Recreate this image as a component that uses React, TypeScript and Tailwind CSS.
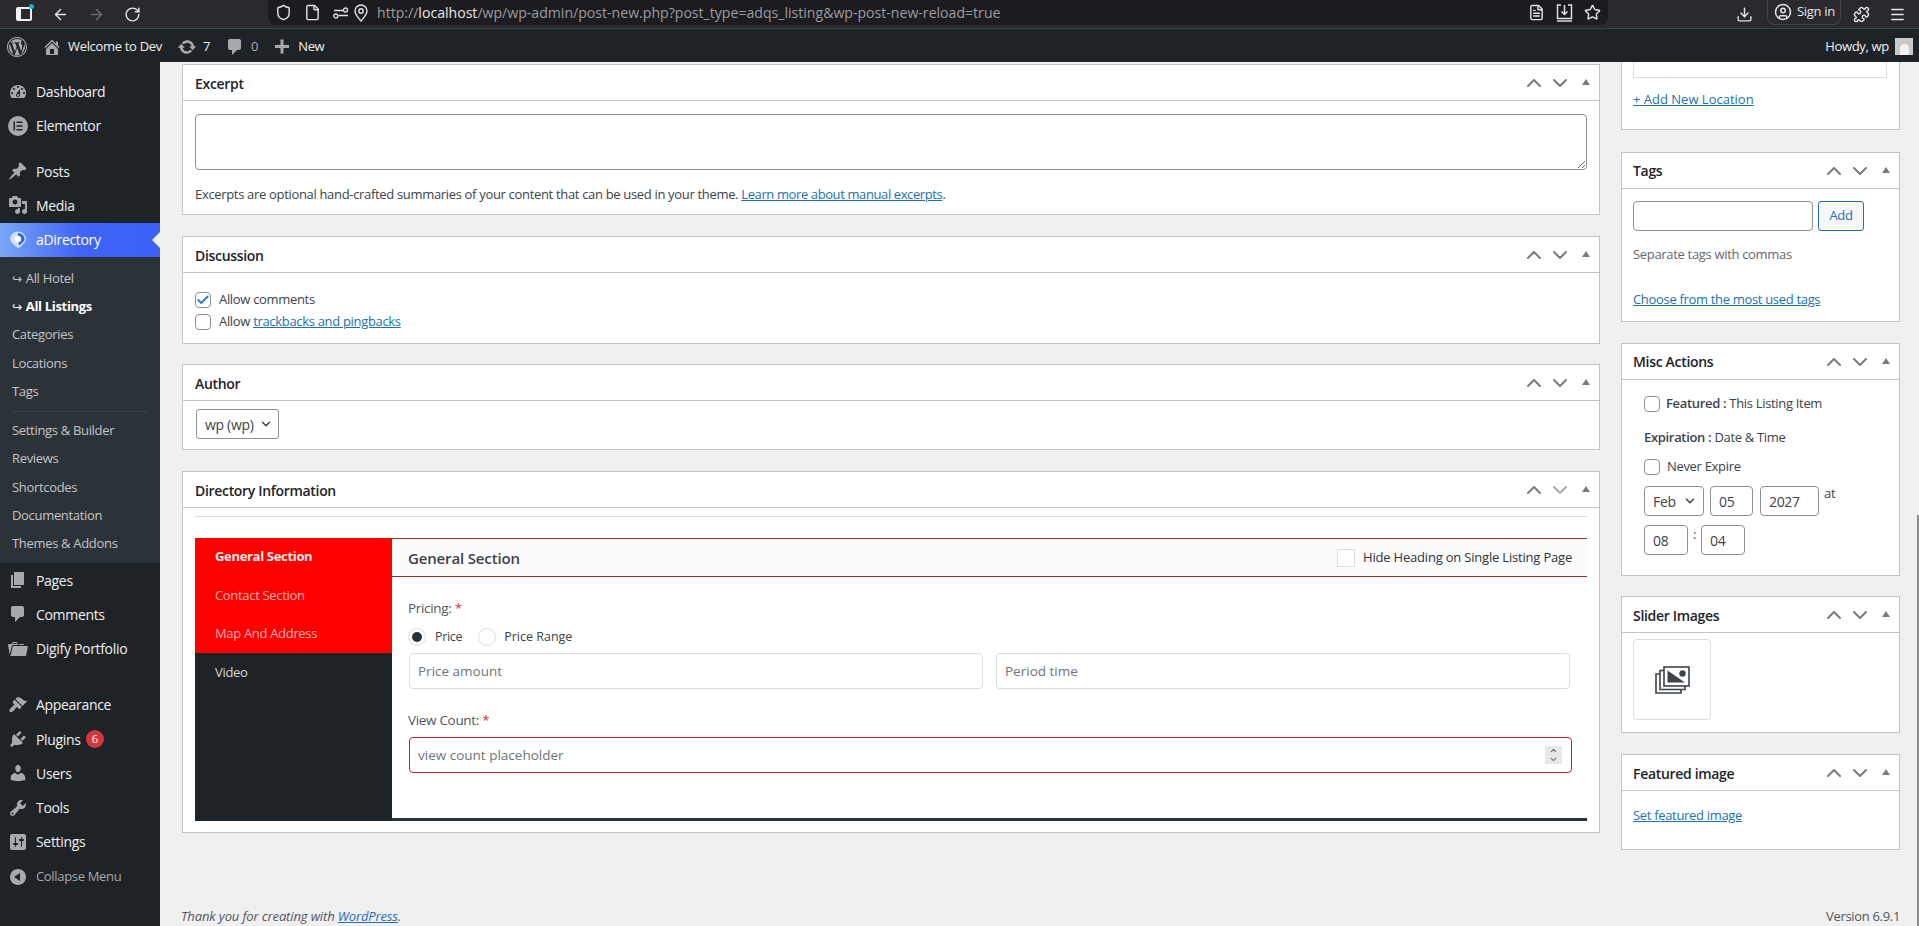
import { ArrowLeft, ArrowRight, Check, ChevronDown, ChevronUp, CircleUser, Download, FileText, File, Menu, Puzzle, RotateCw, Shield, Star } from 'lucide-react';
import type { ReactNode } from 'react';

const ICONS: Record<string, string> = {
  dashboard:
    'M3.76 16h12.48c1.1-1.37 1.76-3.11 1.76-5 0-4.42-3.58-8-8-8s-8 3.58-8 8c0 1.89.66 3.63 1.76 5zM10 4c.55 0 1 .45 1 1s-.45 1-1 1-1-.45-1-1 .45-1 1-1zM6 6c.55 0 1 .45 1 1s-.45 1-1 1-1-.45-1-1 .45-1 1-1zm8 0c.55 0 1 .45 1 1s-.45 1-1 1-1-.45-1-1 .45-1 1-1zm-5.37 5.55L12 7v6c0 1.1-.9 2-2 2s-2-.9-2-2c0-.57.24-1.08.63-1.45zM4 10c.55 0 1 .45 1 1s-.45 1-1 1-1-.45-1-1 .45-1 1-1zm12 0c.55 0 1 .45 1 1s-.45 1-1 1-1-.45-1-1 .45-1 1-1zm-5 3c0-.55-.45-1-1-1s-1 .45-1 1 .45 1 1 1 1-.45 1-1z',
  pin: 'M10.44 3.02l1.82-1.82 6.36 6.35-1.83 1.82c-1.05-.68-2.48-.57-3.41.36l-.75.75c-.92.93-1.04 2.35-.35 3.41l-1.83 1.82-2.41-2.41-2.8 2.79c-.42.42-3.38 2.71-3.8 2.29s1.86-3.39 2.28-3.81l2.79-2.79L4.1 9.36l1.83-1.82c1.05.69 2.48.57 3.4-.36l.75-.75c.93-.92 1.05-2.35.36-3.41z',
  media:
    'M13 11V4c0-.55-.45-1-1-1h-1.67L9 1H5L3.67 3H2c-.55 0-1 .45-1 1v7c0 .55.45 1 1 1h10c.55 0 1-.45 1-1zM7 4.5c1.38 0 2.5 1.12 2.5 2.5S8.38 9.5 7 9.5 4.5 8.38 4.5 7 5.62 4.5 7 4.5zM14 6h5v10.5c0 1.38-1.12 2.5-2.5 2.5S14 17.88 14 16.5s1.12-2.5 2.5-2.5c.17 0 .34.02.5.05V9h-3V6zm-4 8.05V13h2v3.5c0 1.38-1.12 2.5-2.5 2.5S7 17.88 7 16.5 8.12 14 9.5 14c.17 0 .34.02.5.05z',
  page: 'M6 15V2h10v13H6zm-1 1h8v2H3V5h2v11z',
  comment: 'M5 2h9c1.1 0 2 .9 2 2v7c0 1.1-.9 2-2 2h-2l-5 5v-5H5c-1.1 0-2-.9-2-2V4c0-1.1.9-2 2-2z',
  folder:
    'M4 5H.78c-.37 0-.74.32-.69.84l1.56 9.99S3.5 8.47 3.86 6.7c.11-.53.61-.7.98-.7H10s-.7-2.08-.77-2.31C9.11 3.25 8.89 3 8.45 3H5.14c-.36 0-.7.23-.8.64C4.25 4.04 4 5 4 5zm4.88 0h-4s.42-1 .87-1h2.13c.48 0 1 1 1 1zM2.67 16.25c-.31.47-.76.75-1.26.75h15.73c.54 0 .92-.31 1.03-.83.44-2.19 1.68-8.44 1.68-8.44.07-.5-.3-.73-.62-.73H16V5.53c0-.16-.26-.53-.66-.53h-3.76s-.8 1-.8 1H16v1H5.44c-.32 0-.63.14-.73.46-.1.32-1.7 8.03-2.04 8.79z',
  brush:
    'M14.48 11.06L7.41 3.99l1.5-1.5c.5-.56 2.3-.47 3.51.32 1.21.8 1.43 1.28 2.91 2.1 1.18.64 2.45 1.26 4.45.85zm-.71.71L6.7 4.7 4.93 6.47c-.39.39-.39 1.02 0 1.41l1.06 1.06c.39.39.39 1.03 0 1.42-.6.6-1.43 1.11-2.21 1.69-.35.26-.7.53-1.01.84-1.34 1.34-1.86 3.15-1.05 3.96.81.81 2.62.29 3.96-1.05.31-.31.58-.66.84-1.01.58-.78 1.09-1.61 1.69-2.21.39-.39 1.03-.39 1.42 0l1.06 1.06c.39.39 1.02.39 1.41 0z',
  plug: 'M13.11 4.36L9.87 7.6 8 5.73l3.24-3.24c.35-.34 1.05-.2 1.56.32.52.51.66 1.21.31 1.55zm-8 1.77l.91-1.12 9.01 9.01-1.19.84c-.71.71-2.63 1.16-3.82 1.16H6.14L4.9 17.26c-.59.59-1.54.59-2.12 0-.59-.58-.59-1.53 0-2.12l1.24-1.24v-3.88c0-1.13.4-3.19 1.09-3.89zm7.26 3.97l3.24-3.24c.34-.35 1.04-.21 1.55.31.52.51.66 1.21.31 1.55l-3.24 3.25z',
  users:
    'M10 9.25c-2.27 0-2.73-3.44-2.73-3.44C7 4.02 7.82 2 9.97 2c2.16 0 2.98 2.02 2.71 3.81 0 0-.41 3.44-2.68 3.44zm0 2.57L12.72 10c2.39 0 4.52 2.33 4.52 4.53v2.49s-3.65 1.13-7.24 1.13c-3.65 0-7.24-1.13-7.24-1.13v-2.49c0-2.25 1.94-4.48 4.47-4.48z',
  tools:
    'M16.68 9.77c-1.34 1.34-3.3 1.67-4.95.99l-5.41 6.52c-.99.99-2.59.99-3.58 0s-.99-2.59 0-3.57l6.52-5.42c-.68-1.65-.35-3.61.99-4.95 1.28-1.28 3.12-1.62 4.72-1.06l-2.89 2.89 2.82 2.82 2.86-2.87c.53 1.58.18 3.39-1.08 4.67zM3.81 16.21c.4.39 1.04.39 1.43 0 .4-.4.4-1.04 0-1.43-.39-.4-1.03-.4-1.43 0-.39.39-.39 1.03 0 1.43z',
  settings:
    'M18 16V4c0-1.1-.9-2-2-2H4c-1.1 0-2 .9-2 2v12c0 1.1.9 2 2 2h12c1.1 0 2-.9 2-2zM8 11h1c.55 0 1 .45 1 1s-.45 1-1 1H8v1.5c0 .28-.22.5-.5.5s-.5-.22-.5-.5V13H6c-.55 0-1-.45-1-1s.45-1 1-1h1V5.5c0-.28.22-.5.5-.5s.5.22.5.5V11zm5-2h-1c-.55 0-1-.45-1-1s.45-1 1-1h1V5.5c0-.28.22-.5.5-.5s.5.22.5.5V7h1c.55 0 1 .45 1 1s-.45 1-1 1h-1v5.5c0 .28-.22.5-.5.5s-.5-.22-.5-.5V9z',
  collapse: 'M10 2c4.42 0 8 3.58 8 8s-3.58 8-8 8-8-3.58-8-8 3.58-8 8-8zm2 12V6l-6 4z',
  home: 'M16 8.5l1.53 1.53-1.06 1.06L10 4.62l-6.47 6.47-1.06-1.06L10 2.5l4 4v-2h2v4zm-6-2.46l6 5.99V18H4v-5.97zM12 17v-5H8v5h4z',
  update:
    'M10.2 3.28c3.53 0 6.43 2.61 6.92 6h2.08l-3.5 4-3.5-4h2.32c-.45-1.97-2.21-3.45-4.32-3.45-1.45 0-2.73.71-3.54 1.78L4.95 5.66C6.23 4.2 8.11 3.28 10.2 3.28zm-.4 13.44c-3.52 0-6.43-2.61-6.92-6H.8l3.5-4c1.17 1.33 2.33 2.67 3.5 4H5.48c.45 1.97 2.21 3.45 4.32 3.45 1.45 0 2.73-.71 3.54-1.78l1.71 1.95c-1.28 1.46-3.15 2.38-5.25 2.38z',
  plus: 'M17 8v3h-5.5v5.5h-3V11H3V8h5.5V2.5h3V8H17z',
  wp: 'M20 10c0-5.52-4.48-10-10-10S0 4.48 0 10s4.48 10 10 10 10-4.48 10-10zM10 1.01c4.96 0 8.99 4.03 8.99 8.99s-4.03 8.99-8.99 8.99S1.01 14.96 1.01 10 5.04 1.01 10 1.01zM8.01 14.82L4.96 6.61c.49-.03 1.05-.08 1.05-.08.43-.05.38-1.01-.06-.99 0 0-1.29.1-2.13.1-.15 0-.33 0-.52-.01 1.44-2.17 3.9-3.6 6.7-3.6 2.09 0 3.99.79 5.41 2.09-.6-.08-1.45.35-1.45 1.42 0 .66.38 1.22.79 1.88.31.54.5 1.22.5 2.21 0 1.34-1.27 4.48-1.27 4.48l-2.71-7.5c.48-.03.75-.16.75-.16.43-.05.38-1.1-.05-1.08 0 0-1.3.11-2.14.11-.78 0-2.11-.11-2.11-.11-.43-.02-.48 1.06-.05 1.08l.84.08 1.12 3.04zm6.02 2.15L16.64 10s.67-1.69.39-3.81c.63 1.14.94 2.42.94 3.81 0 2.96-1.56 5.58-3.94 6.97zM2.68 6.77L6.5 17.25C3.83 15.96 2.03 13.2 2.03 10c0-1.18.21-2.25.65-3.23zm7.45 4.09l2.53 6.91c.06.1.13.2.2.28-.93.31-1.9.49-2.86.49-.82 0-1.61-.12-2.36-.35z',
};

function Dash({ name, className = 'text-[#a7aaad]' }: { name: string; className?: string }) {
  return (
    <svg viewBox="0 0 20 20" fill="currentColor" className={`h-5 w-5 shrink-0 ${className}`}>
      <path d={ICONS[name]} />
    </svg>
  );
}

function ElementorIcon() {
  return (
    <svg viewBox="0 0 20 20" className="h-5 w-5 shrink-0 text-[#a7aaad]" fill="currentColor">
      <path
        fillRule="evenodd"
        d="M10 0a10 10 0 1 0 0 20 10 10 0 0 0 0-20zM7 5.5H5.5v9H7v-9zm7.5 0H8.5V7h6V5.5zm0 3.7h-6v1.5h6V9.2zm0 3.8h-6v1.5h6V13z"
      />
    </svg>
  );
}

function DirectoryIcon() {
  return (
    <svg viewBox="0 0 20 20" className="h-5 w-5 shrink-0">
      <path d="M10 1.5 C14 1.5 18 5 18 9 C18 11.5 14.5 15 10.5 18.5 C6 15 2 11.8 2 9 C2 5 6 1.5 10 1.5 Z" fill="#cfe0ff" />
      <path d="M10 3 C13 3 16.5 5.8 16.5 9 C16.5 11 13.5 13.5 11 15.5 L10 9 Z" fill="#2b5ff0" />
      <circle cx="10" cy="9" r="3.2" fill="#ffffff" />
    </svg>
  );
}

function PermissionsIcon() {
  return (
    <svg viewBox="0 0 16 12" className="h-3 w-4 shrink-0" fill="none" stroke="#e4e4e7" strokeWidth="1.3">
      <path d="M1 3.5H10M5.5 8.5H15" />
      <circle cx="12.5" cy="3" r="2" />
      <circle cx="2.8" cy="9" r="2" />
    </svg>
  );
}

function PinIcon() {
  return (
    <svg viewBox="0 0 14 18" className="h-[18px] w-[14px] shrink-0" fill="none" stroke="#e4e4e7" strokeWidth="1.4">
      <path d="M7 17C4 13.5 1 10.5 1 7a6 6 0 0 1 12 0c0 3.5-3 6.5-6 10z" />
      <circle cx="7" cy="7" r="2.2" />
    </svg>
  );
}

function SavePageIcon() {
  return (
    <svg viewBox="0 0 17 18" className="h-[18px] w-[17px] shrink-0" fill="none" stroke="#e4e4e7" strokeWidth="1.4">
      <path d="M5 1H1.5V14.5H15.5V1H12" />
      <path d="M1 17H16" />
      <path d="M8.5 1V10M5.5 7.5L8.5 10.5L11.5 7.5" />
    </svg>
  );
}

function MenuRow({ icon, label, children }: { icon: ReactNode; label: string; children?: ReactNode }) {
  return (
    <div className="flex h-[34.25px] items-center gap-2 pl-2 text-[14px] text-[#f0f0f1]">
      {icon}
      <span>{label}</span>
      {children}
    </div>
  );
}

function SubRow({ label, hook, bold }: { label: string; hook?: boolean; bold?: boolean }) {
  return (
    <div className={`flex h-[28.25px] items-center pl-3 text-[13px] ${bold ? 'font-bold text-white' : 'text-[#c3c4c7]'}`}>
      {hook && <span className="mr-[4px] font-['DejaVu_Sans',sans-serif] text-[12px] font-normal">↪</span>}
      {label}
    </div>
  );
}

function Sidebar() {
  return (
    <aside className="flex w-40 shrink-0 flex-col bg-[#1d2327] pt-[12.5px]">
      <MenuRow icon={<Dash name="dashboard" />} label="Dashboard" />
      <MenuRow icon={<ElementorIcon />} label="Elementor" />
      <div className="h-[11px]" />
      <MenuRow icon={<Dash name="pin" />} label="Posts" />
      <MenuRow icon={<Dash name="media" />} label="Media" />
      <div className="relative flex h-[34px] items-center gap-2 bg-[linear-gradient(90deg,#7aa6f5_0%,#3f64f6_50%,#3a62f6_100%)] pl-2 text-[14px] text-white">
        <DirectoryIcon />
        <span>aDirectory</span>
        <span className="absolute right-0 top-[9px] h-0 w-0 border-y-[8px] border-r-[8px] border-y-transparent border-r-[#f0f0f1]" />
      </div>
      <div className="flex flex-col bg-[#2c3338] pb-[5px] pt-[8px]">
        <SubRow label="All Hotel" hook />
        <SubRow label="All Listings" hook bold />
        <SubRow label="Categories" />
        <SubRow label="Locations" />
        <SubRow label="Tags" />
        <div className="mx-3 my-[5px] h-px bg-[#3c434a]" />
        <SubRow label="Settings & Builder" />
        <SubRow label="Reviews" />
        <SubRow label="Shortcodes" />
        <SubRow label="Documentation" />
        <SubRow label="Themes & Addons" />
      </div>
      <MenuRow icon={<Dash name="page" />} label="Pages" />
      <MenuRow icon={<Dash name="comment" />} label="Comments" />
      <MenuRow icon={<Dash name="folder" />} label="Digify Portfolio" />
      <div className="h-[22px]" />
      <MenuRow icon={<Dash name="brush" />} label="Appearance" />
      <MenuRow icon={<Dash name="plug" />} label="Plugins">
        <span className="-ml-[3px] flex h-[18px] w-[18px] items-center justify-center rounded-full bg-[#d63638] text-[11px] text-white">6</span>
      </MenuRow>
      <MenuRow icon={<Dash name="users" />} label="Users" />
      <MenuRow icon={<Dash name="tools" />} label="Tools" />
      <MenuRow icon={<Dash name="settings" />} label="Settings" />
      <div className="mt-[1px] flex h-[34px] items-center gap-2 pl-2 text-[13px] text-[#a7aaad]">
        <Dash name="collapse" />
        <span>Collapse Menu</span>
      </div>
    </aside>
  );
}

function BrowserBar() {
  const iconClass = 'h-[17px] w-[17px] shrink-0 text-[#e4e4e7]';
  return (
    <div className="flex h-[29px] shrink-0 items-start border-b border-[#3e4347] bg-[#2a2a2e]">
      <div className="flex h-[28px] w-[268px] items-center pl-[16px]">
        <div className="relative mr-[20px] h-[14px] w-[16px] rounded-[2px] border-2 border-[#f2f2f2] border-l-[5px]">
          <span className="absolute -right-[4px] -top-[5px] h-[5px] w-[5px] rounded-full bg-[#1ea7e6]" />
        </div>
        <ArrowLeft className={`${iconClass} mr-[19px]`} />
        <ArrowRight className="mr-[19px] h-[17px] w-[17px] shrink-0 text-[#6b6b70]" />
        <RotateCw className={iconClass} />
      </div>
      <div className="flex h-[25px] w-[1340px] items-center rounded-b-lg bg-[#1c1b20] pl-[6px]">
        <Shield className={`${iconClass} ml-[1px] mr-[12px]`} />
        <File className={`${iconClass} mr-[12px]`} />
        <PermissionsIcon />
        <span className="mx-[5px]"><PinIcon /></span>
        <span className="ml-[4px] text-[14.1px] tracking-normal text-[#9b9ba0]">
          http://<span className="text-[#e8e8e8]">localhost</span>/wp/wp-admin/post-new.php?post_type=adqs_listing&amp;wp-post-new-reload=true
        </span>
        <div className="ml-auto flex items-center gap-[11px] pr-[7px]">
          <FileText className={iconClass} />
          <SavePageIcon />
          <Star className={iconClass} />
        </div>
      </div>
      <div className="flex h-[28px] flex-1 items-center">
        <Download className={`${iconClass} ml-[128px]`} />
        <div className="ml-[14px] flex h-[25px] w-[74px] items-center gap-[5px] self-start rounded-b-lg border border-t-0 border-[#3e4347] pl-[6px] text-[13px] text-[#e4e4e7]">
          <CircleUser className="h-[18px] w-[18px]" />
          Sign in
        </div>
        <Puzzle className={`${iconClass} ml-[12px]`} />
        <Menu className={`${iconClass} ml-[19px]`} />
      </div>
    </div>
  );
}

function AdminBar() {
  return (
    <div className="flex h-[33px] shrink-0 items-center bg-[#1d2327] pt-[2px] text-[13px] text-[#f0f0f1]">
      <Dash name="wp" className="ml-[7px] text-[#a7aaad]" />
      <Dash name="home" className="ml-[15px] text-[#a7aaad]" />
      <span className="ml-[6px]">Welcome to Dev</span>
      <Dash name="update" className="ml-[15px] text-[#a7aaad]" />
      <span className="ml-[6px]">7</span>
      <Dash name="comment" className="ml-[15px] text-[#a7aaad]" />
      <span className="ml-[6px] text-[#a7aaad]">0</span>
      <Dash name="plus" className="ml-[14px] text-[#a7aaad]" />
      <span className="ml-[6px]">New</span>
      <span className="ml-auto">Howdy, wp</span>
      <div className="ml-[6px] mr-[6px] flex h-[17px] w-[18px] items-end justify-center bg-[#c9c9c9]">
        <div className="h-[11px] w-[9px] rounded-t-full bg-[#f2f2f2]" />
      </div>
    </div>
  );
}

function Handles({ dimDown }: { dimDown?: boolean }) {
  return (
    <div className="flex items-center">
      <span className="flex w-[26px] justify-center">
        <ChevronUp className="h-6 w-6 text-[#787c82]" strokeWidth={2} />
      </span>
      <span className="flex w-[26px] justify-center">
        <ChevronDown className={`h-6 w-6 ${dimDown ? 'text-[#a7aaad]' : 'text-[#787c82]'}`} strokeWidth={2} />
      </span>
      <span className="flex w-[26px] justify-center">
        <span className="h-0 w-0 -translate-y-[1px] border-x-[4px] border-b-[6px] border-x-transparent border-b-[#787c82]" />
      </span>
    </div>
  );
}

function Panel({ title, dimDown, pad = 'pl-3 pt-[1px]', className = '', children }: { title: string; dimDown?: boolean; pad?: string; className?: string; children: ReactNode }) {
  return (
    <section className={`shrink-0 border border-[#c3c4c7] bg-white ${className}`}>
      <div className={`flex h-9 items-center justify-between border-b border-[#c3c4c7] ${pad}`}>
        <h2 className="text-[14px] font-semibold text-[#1d2327]">{title}</h2>
        <Handles dimDown={dimDown} />
      </div>
      {children}
    </section>
  );
}

function Box({ checked }: { checked?: boolean }) {
  return (
    <span className="flex h-4 w-4 shrink-0 items-center justify-center rounded-[4px] border border-[#8c8f94] bg-white">
      {checked && <Check className="h-[14px] w-[14px] text-[#3582c4]" strokeWidth={3.5} />}
    </span>
  );
}

function Radio({ on }: { on?: boolean }) {
  return (
    <span className="flex h-[18px] w-[18px] shrink-0 items-center justify-center rounded-full border border-[#dedede] bg-white">
      {on && <span className="h-[10px] w-[10px] rounded-full bg-[#2c3338]" />}
    </span>
  );
}

function Link({ children, className = '' }: { children: ReactNode; className?: string }) {
  return <a className={`text-[#2271b1] underline ${className}`}>{children}</a>;
}

function GalleryIcon() {
  return (
    <svg viewBox="0 0 35 28" className="h-7 w-[35px]" fill="none" stroke="#3c434a" strokeWidth="1.6">
      <rect x="9" y="1" width="25" height="19" />
      <path d="M12.5 4.5 L30 16.5 H12.5 Z" fill="#3c434a" stroke="none" />
      <circle cx="27.5" cy="7.5" r="3.2" fill="#3c434a" stroke="none" />
      <path d="M9 4.5H5V23.5H30V20" />
      <path d="M5 8H1V27H26V23.5" />
    </svg>
  );
}

function ExcerptPanel() {
  return (
    <Panel title="Excerpt" className="h-[151px]">
      <div className="px-3 pt-[13px]">
        <textarea className="block h-14 w-full rounded-[4px] border border-[#8c8f94] bg-white" />
        <p className="mt-[15px] text-[13px] tracking-[-0.025em] text-[#3c434a]">
          Excerpts are optional hand-crafted summaries of your content that can be used in your theme.{' '}
          <Link className="tracking-[-0.03em]">Learn more about manual excerpts</Link>.
        </p>
      </div>
    </Panel>
  );
}

function DiscussionPanel() {
  return (
    <Panel title="Discussion" className="mt-[21px] h-[108px]">
      <div className="flex flex-col gap-[6px] px-3 pt-[19px] text-[13px] text-[#3c434a]">
        <label className="flex h-4 items-center gap-2">
          <Box checked />
          Allow comments
        </label>
        <label className="flex h-4 items-center gap-2">
          <Box />
          <span>
            Allow <Link>trackbacks and pingbacks</Link>
          </span>
        </label>
      </div>
    </Panel>
  );
}

function AuthorPanel() {
  return (
    <Panel title="Author" className="mt-[20px] h-[86px]">
      <div className="pl-[13px] pt-[8px]">
        <div className="flex h-[30px] w-[83px] items-center justify-between rounded-[3px] border border-[#8c8f94] pl-2 pr-[5px] text-[14px] text-[#3c434a]">
          wp (wp)
          <ChevronDown className="h-[14px] w-[14px] text-[#3c434a]" strokeWidth={2.5} />
        </div>
      </div>
    </Panel>
  );
}

function DirectoryPanel() {
  const inputClass = 'h-9 flex-1 rounded-[4px] border border-[#dcdcde] pl-2 text-[13.5px] tracking-normal placeholder:text-[#6e7479]';
  return (
    <Panel title="Directory Information" dimDown className="mt-[21px] h-[362px]">
      <div className="px-3 pt-2">
        <div className="h-px bg-[#dcdcde]" />
        <div className="mt-[21px] flex h-[283px]">
          <div className="flex w-[197px] shrink-0 flex-col bg-[#1d2327] text-[13px]">
            <div className="flex h-[38.4px] items-center bg-[#ff0000] pl-5 font-bold text-[#fde8e8]">General Section</div>
            <div className="flex h-[38.4px] items-center bg-[#ff0000] pl-5 text-[#ffb0b0]">Contact Section</div>
            <div className="flex h-[38.4px] items-center bg-[#ff0000] pl-5 text-[#ffb0b0]">Map And Address</div>
            <div className="flex h-[38.4px] items-center pl-5 text-[#d5d6d7]">Video</div>
          </div>
          <div className="flex flex-1 flex-col border-b-[3px] border-b-[#2c3338]">
            <div className="flex h-[39px] shrink-0 items-center justify-between border-y border-[#a52a2a] bg-[#fcfcfc] pl-4 pr-[15px]">
              <span className="pt-[1px] text-[15px] font-semibold tracking-[-0.01em] text-[#3c434a]">General Section</span>
              <label className="flex items-center gap-2 text-[13px] tracking-[-0.015em] text-[#2c3338]">
                <span className="h-[18px] w-[18px] border border-[#dcdcde] bg-white" />
                Hide Heading on Single Listing Page
              </label>
            </div>
            <div className="pl-4 pr-[15px] pt-[22px] text-[13.5px] text-[#50575e]">
              <div className="leading-[18px]">
                Pricing: <span className="text-[#d63638]">*</span>
              </div>
              <div className="mt-[11px] flex items-center text-[12.5px] text-[#3c434a]">
                <Radio on />
                <span className="ml-[9px]">Price</span>
                <span className="ml-[16px]"><Radio /></span>
                <span className="ml-[8px] tracking-normal">Price Range</span>
              </div>
              <div className="mt-[6px] flex gap-[13px] pl-px pr-[2px]">
                <input placeholder="Price amount" className={inputClass} />
                <input placeholder="Period time" className={inputClass} />
              </div>
              <div className="mt-[22px] leading-[18px]">
                View Count: <span className="text-[#d63638]">*</span>
              </div>
              <div className="ml-px mt-[8px] flex h-9 items-center rounded-[4px] border border-[#b3262e] pr-[9px]">
                <input placeholder="view count placeholder" className="h-full flex-1 bg-transparent pl-2 text-[13.5px] tracking-normal outline-none placeholder:text-[#6e7479]" />
                <span className="flex h-[18px] w-[17px] flex-col items-center justify-center bg-[#e8e8e8] text-[#6e7479]">
                  <ChevronUp className="h-[9px] w-[9px]" strokeWidth={3} />
                  <ChevronDown className="h-[9px] w-[9px]" strokeWidth={3} />
                </span>
              </div>
            </div>
          </div>
        </div>
      </div>
    </Panel>
  );
}

function TagsPanel() {
  return (
    <Panel title="Tags" pad="pl-[11px]" className="mt-[22px] h-[170px]">
      <div className="pl-[11px] pt-[12px] text-[13px]">
        <div className="flex gap-[5px]">
          <input className="h-[30px] w-[180px] rounded-[4px] border border-[#8c8f94]" />
          <button className="h-[30px] w-[46px] rounded-[3px] border border-[#2271b1] bg-[#f6f7f7] text-[#2271b1]">Add</button>
        </div>
        <p className="mt-[14px] text-[#646970]">Separate tags with commas</p>
        <p className="mt-[25px]">
          <Link>Choose from the most used tags</Link>
        </p>
      </div>
    </Panel>
  );
}

function MiscPanel() {
  const field = 'flex h-[30px] items-center rounded-[4px] border border-[#8c8f94] pl-2 text-[14px] text-[#3c434a]';
  return (
    <Panel title="Misc Actions" pad="pl-[11px]" className="mt-[21px] h-[233px]">
      <div className="pl-[22px] pt-4 text-[13px] text-[#3c434a]">
        <div className="flex h-4 items-center gap-[6px]">
          <Box />
          <span>
            <span className="font-semibold">Featured :</span> This Listing Item
          </span>
        </div>
        <div className="mt-[16px] leading-[18px]">
          <span className="font-semibold">Expiration :</span> Date &amp; Time
        </div>
        <div className="mt-[13px] flex h-4 items-center gap-[7px]">
          <Box />
          Never Expire
        </div>
        <div className="mt-[11px] flex items-start">
          <div className={`${field} w-[60px] justify-between pr-[6px]`}>
            Feb
            <ChevronDown className="h-[14px] w-[14px]" strokeWidth={2.5} />
          </div>
          <div className={`${field} ml-[6px] w-[43px]`}>05</div>
          <div className={`${field} ml-[7px] w-[59px]`}>2027</div>
          <span className="ml-[5px] -mt-[2px]">at</span>
        </div>
        <div className="mt-[9px] flex items-start">
          <div className={`${field} w-[44px]`}>08</div>
          <span className="mx-[5px]">:</span>
          <div className={`${field} w-[44px]`}>04</div>
        </div>
      </div>
    </Panel>
  );
}

function SliderPanel() {
  return (
    <Panel title="Slider Images" pad="pl-[11px] pt-[1px]" className="mt-[20px] h-[137px]">
      <div className="pl-[11px] pt-[6px]">
        <div className="flex h-[81px] w-[78px] items-center justify-center rounded-[4px] border border-[#dcdcde]">
          <GalleryIcon />
        </div>
      </div>
    </Panel>
  );
}

function FeaturedPanel() {
  return (
    <Panel title="Featured image" pad="pl-[11px] pt-[1px]" className="mt-[21px] h-[96px]">
      <div className="pl-[11px] pt-[15px] text-[13px]">
        <Link>Set featured image</Link>
      </div>
    </Panel>
  );
}

export default function App() {
  return (
    <div className="relative flex h-[926px] w-[1919px] flex-col overflow-hidden bg-[#f0f0f1] font-['Open_Sans','Liberation_Sans',sans-serif] tracking-[-0.02em]">
      <BrowserBar />
      <AdminBar />
      <div className="flex min-h-0 flex-1">
        <Sidebar />
        <main className="flex min-w-0 flex-1 flex-col pl-[22px] pr-[19px]">
          <div className="flex flex-1 items-start gap-[21px]">
            <div className="flex w-[1418px] shrink-0 flex-col pt-[2px]">
              <ExcerptPanel />
              <DiscussionPanel />
              <AuthorPanel />
              <DirectoryPanel />
            </div>
            <div className="flex w-[279px] shrink-0 flex-col">
              <div className="h-[68px] border-x border-b border-[#c3c4c7] bg-white pl-[11px] pr-3">
                <div className="h-4 border-x border-b border-[#dcdcde]" />
                <Link className="mt-[12px] block text-[13px] font-medium tracking-normal">+ Add New Location</Link>
              </div>
              <TagsPanel />
              <MiscPanel />
              <SliderPanel />
              <FeaturedPanel />
            </div>
          </div>
          <footer className="flex items-center justify-between text-[13px] text-[#50575e]">
            <span className="-ml-[1px] italic tracking-[-0.01em]">
              Thank you for creating with <Link>WordPress</Link>.
            </span>
            <span>Version 6.9.1</span>
          </footer>
        </main>
      </div>
      <div className="absolute bottom-0 right-0 top-[515px] w-[2px] bg-[#8c8c8c]" />
    </div>
  );
}
